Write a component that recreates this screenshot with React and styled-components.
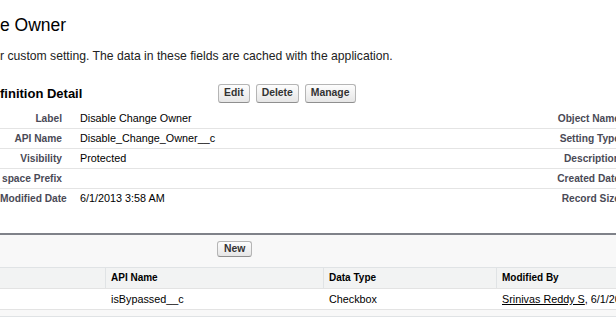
import styled, { createGlobalStyle } from "styled-components";

const GlobalStyle = createGlobalStyle`
  body {
    margin: 0;
    background: #fff;
    overflow: hidden;
    font-family: "Liberation Sans", Arial, sans-serif;
    color: #000;
  }
`;

const Page = styled.div`
  width: 616px;
  height: 323px;
  overflow: hidden;
  padding-top: 14px;
  box-sizing: border-box;
`;

const Title = styled.h1`
  margin: 0;
  font-size: 17.5px;
  font-weight: normal;
  line-height: 22px;
  white-space: nowrap;
`;

const Subtitle = styled.p`
  margin: 13px 0 0;
  font-size: 12.2px;
  line-height: 15px;
  color: #222;
  white-space: nowrap;
`;

const Block = styled.div`
  width: 800px;
  margin-top: ${(props) => props.top}px;
  background: ${(props) => (props.related ? "#f8f8f8" : "#fff")};
  border-top: ${(props) => (props.related ? "2px solid #7f8289" : "none")};
  border-bottom: ${(props) => (props.related ? "1px solid #e0e3e5" : "none")};
  padding-bottom: ${(props) => (props.related ? "6px" : "0")};
`;

const BlockHeader = styled.div`
  display: flex;
  align-items: ${(props) => (props.related ? "flex-start" : "center")};
  gap: 6px;
  height: ${(props) => (props.related ? "32px" : "20px")};
  padding-top: ${(props) => (props.related ? "6px" : "0")};
  padding-left: ${(props) => (props.related ? "217px" : "0")};
  box-sizing: border-box;
`;

const BlockTitle = styled.h2`
  margin: 0;
  width: 212px;
  font-size: 13px;
  font-weight: bold;
  white-space: nowrap;
`;

const Button = styled.button`
  height: ${(props) => props.h || 19}px;
  padding: 0 ${(props) => props.pad || 5}px;
  border: 1px solid #b5b5b5;
  border-bottom-color: #8f8f8f;
  border-radius: 3px;
  background: linear-gradient(#fdfdfd, #e6e6e6);
  font-family: "Liberation Sans", Arial, sans-serif;
  font-size: 10.4px;
  font-weight: bold;
  color: #333;
  line-height: 1;
  cursor: pointer;
`;

const DetailList = styled.div`
  margin-top: 6px;
`;

// label / value / label / value, the far value column is off screen
const DetailRow = styled.div`
  display: grid;
  grid-template-columns: 72px 398px 160px 170px;
  height: 19px;
  border-bottom: 1px solid ${(props) => (props.last ? "transparent" : "#e4e4e4")};
`;

const LabelCell = styled.div`
  padding-right: 10px;
  text-align: right;
  font-size: 10.2px;
  font-weight: bold;
  color: #4a4a56;
  line-height: 19px;
  white-space: nowrap;
`;

const ValueCell = styled.div`
  padding-left: 8px;
  font-size: 10.8px;
  line-height: 19px;
  white-space: nowrap;
`;

const TableRow = styled.div`
  display: grid;
  grid-template-columns: 105px 218px 173px 304px;
  height: 20px;
  background: ${(props) => (props.head ? "#f2f3f3" : "#fff")};
  border-top: ${(props) => (props.head ? "1px solid #e0e3e5" : "none")};
  border-bottom: 1px solid #e3e3e3;
`;

const HeadCell = styled.div`
  border-left: 1px solid ${(props) => (props.first ? "transparent" : "#e0e3e5")};
  padding-left: 5px;
  font-size: 10px;
  font-weight: bold;
  line-height: 20px;
  white-space: nowrap;
`;

const DataCell = styled.div`
  padding-left: 6px;
  font-size: 10.8px;
  line-height: 20px;
  white-space: nowrap;
`;

const UserLink = styled.a`
  color: #000;
  text-decoration: underline;
`;

const details = [
  ["Label", "Disable Change Owner", "Object Name"],
  ["API Name", "Disable_Change_Owner__c", "Setting Type"],
  ["Visibility", "Protected", "Description"],
  ["space Prefix", "", "Created Date"],
  ["Modified Date", "6/1/2013 3:58 AM", "Record Size"],
];

const App = () => {
  return (
    <Page>
      <GlobalStyle />
      <Title>e Owner</Title>
      <Subtitle>
        r custom setting. The data in these fields are cached with the application.
      </Subtitle>

      <Block top={19}>
        <BlockHeader>
          <BlockTitle>finition Detail</BlockTitle>
          <Button>Edit</Button>
          <Button>Delete</Button>
          <Button>Manage</Button>
        </BlockHeader>
        <DetailList>
          {details.map((row, i) => (
            <DetailRow key={row[0]} last={i === details.length - 1}>
              <LabelCell>{row[0]}</LabelCell>
              <ValueCell>{row[1]}</ValueCell>
              <LabelCell>{row[2]}</LabelCell>
              <ValueCell />
            </DetailRow>
          ))}
        </DetailList>
      </Block>

      <Block top={24} related>
        <BlockHeader related>
          <Button h={16} pad={6}>New</Button>
        </BlockHeader>
        <TableRow head>
          <HeadCell first></HeadCell>
          <HeadCell>API Name</HeadCell>
          <HeadCell>Data Type</HeadCell>
          <HeadCell>Modified By</HeadCell>
        </TableRow>
        <TableRow>
          <DataCell></DataCell>
          <DataCell>isBypassed__c</DataCell>
          <DataCell>Checkbox</DataCell>
          <DataCell>
            <UserLink href="#">Srinivas Reddy S</UserLink>, 6/1/2013 3:58 AM
          </DataCell>
        </TableRow>
      </Block>
    </Page>
  );
};

export default App;
